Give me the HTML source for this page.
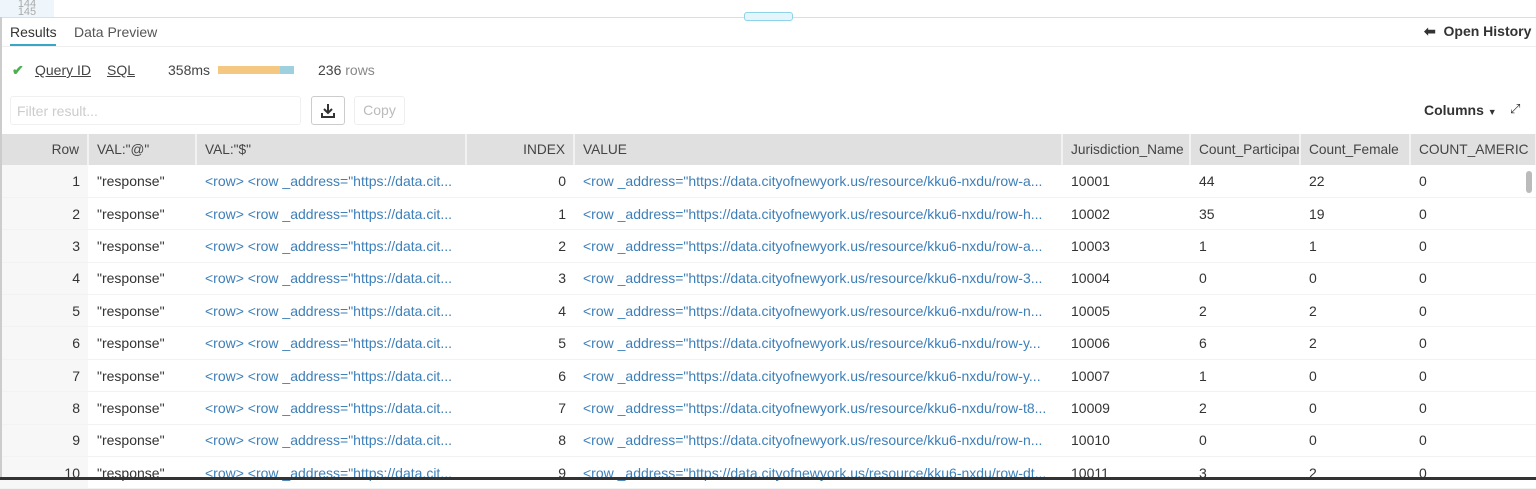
<!DOCTYPE html>
<html><head><style>
*{margin:0;padding:0;box-sizing:border-box}
body{width:1536px;height:480px;overflow:hidden;background:#fff;font-family:"Liberation Sans",sans-serif;font-size:14px;color:#333;position:relative}
.a{position:absolute;white-space:nowrap}
table{position:absolute;left:0;top:134px;border-collapse:collapse;table-layout:fixed;width:1536px}
th{background:#e0e0e0;height:31px;font-weight:normal;text-align:left;padding:0 8px;color:#444;border-right:2px solid #f2f2f2;overflow:hidden;white-space:nowrap;font-size:13.7px}
td{height:32.4px;padding:0 8px 0 9px;border-bottom:1px solid #f2f2f2;white-space:nowrap;overflow:hidden;color:#333;font-size:14px}
td.r,th.r{text-align:right}
td.n{background:#f7f7f7}
.l{color:#3d7fb8}
</style></head><body>
<div class="a" style="left:0;top:0;width:54px;height:17px;background:#eef6fb;color:#aaa;font-size:11px;text-align:center;line-height:8px;overflow:hidden">144<br>145</div>
<div class="a" style="left:0;top:17px;width:1536px;height:1px;background:#ddd"></div>
<div class="a" style="left:744px;top:12px;width:49px;height:9px;border:1px solid #8fd3e8;border-radius:3px;background:#e4f5fb"></div>
<div class="a" style="left:10px;top:24px;font-size:14px;color:#333">Results</div>
<div class="a" style="left:10px;top:44px;width:46px;height:2px;background:#3aa6c7"></div>
<div class="a" style="left:74px;top:24px;font-size:14px;color:#555">Data Preview</div>
<div class="a" style="left:0;top:46px;width:1536px;height:1px;background:#eee"></div>
<div class="a" style="left:1424px;top:23px;font-size:14px;color:#333;font-weight:bold">&#11013;&nbsp; Open History</div>
<div class="a" style="left:12px;top:62px;color:#4caf50;font-size:14px;font-weight:bold">&#10004;</div>
<div class="a" style="left:35px;top:62px;text-decoration:underline;color:#444">Query ID</div>
<div class="a" style="left:107px;top:62px;text-decoration:underline;color:#444">SQL</div>
<div class="a" style="left:168px;top:62px;color:#444">358ms</div>
<div class="a" style="left:218px;top:66px;width:62px;height:8px;background:#f5c882"></div>
<div class="a" style="left:280px;top:66px;width:14px;height:8px;background:#9fd0e0"></div>
<div class="a" style="left:318px;top:62px;color:#444">236 <span style="color:#888">rows</span></div>
<div class="a" style="left:10px;top:96px;width:291px;height:29px;border:1px solid #f0f0f0;border-radius:3px;color:#ccc;padding:6px 6px;font-size:14px">Filter result...</div>
<div class="a" style="left:311px;top:96px;width:34px;height:29px;border:1px solid #ccc;border-radius:3px;background:#fff">
<svg width="32" height="27" viewBox="0 0 32 27"><path d="M16 7v9M12 12l4 4 4-4" stroke="#333" stroke-width="2" fill="none"/><path d="M10 16v4h12v-4" stroke="#333" stroke-width="2" fill="none"/></svg></div>
<div class="a" style="left:354px;top:96px;width:51px;height:29px;border:1px solid #eee;border-radius:3px;color:#bbb;text-align:center;line-height:27px">Copy</div>
<div class="a" style="left:1424px;top:102px;font-weight:bold;color:#333">Columns <span style="font-size:9px">&#9660;</span></div>
<div class="a" style="left:1510px;top:101px;font-size:13px;color:#333">&#10530;</div>
<table>
<colgroup><col style="width:88px"><col style="width:108px"><col style="width:270px"><col style="width:108px"><col style="width:488px"><col style="width:128px"><col style="width:110px"><col style="width:110px"><col style="width:126px"></colgroup>
<tr><th class="r">Row</th><th>VAL:"@"</th><th>VAL:"$"</th><th class="r">INDEX</th><th>VALUE</th><th>Jurisdiction_Name</th><th>Count_Participant</th><th>Count_Female</th><th>COUNT_AMERIC</th></tr>
<tr><td class="r n">1</td><td>"response"</td><td class="l">&lt;row&gt; &lt;row _address="https://data.cit...</td><td class="r">0</td><td class="l">&lt;row _address="https://data.cityofnewyork.us/resource/kku6-nxdu/row-a...</td><td>10001</td><td>44</td><td>22</td><td>0</td></tr>
<tr><td class="r n">2</td><td>"response"</td><td class="l">&lt;row&gt; &lt;row _address="https://data.cit...</td><td class="r">1</td><td class="l">&lt;row _address="https://data.cityofnewyork.us/resource/kku6-nxdu/row-h...</td><td>10002</td><td>35</td><td>19</td><td>0</td></tr>
<tr><td class="r n">3</td><td>"response"</td><td class="l">&lt;row&gt; &lt;row _address="https://data.cit...</td><td class="r">2</td><td class="l">&lt;row _address="https://data.cityofnewyork.us/resource/kku6-nxdu/row-a...</td><td>10003</td><td>1</td><td>1</td><td>0</td></tr>
<tr><td class="r n">4</td><td>"response"</td><td class="l">&lt;row&gt; &lt;row _address="https://data.cit...</td><td class="r">3</td><td class="l">&lt;row _address="https://data.cityofnewyork.us/resource/kku6-nxdu/row-3...</td><td>10004</td><td>0</td><td>0</td><td>0</td></tr>
<tr><td class="r n">5</td><td>"response"</td><td class="l">&lt;row&gt; &lt;row _address="https://data.cit...</td><td class="r">4</td><td class="l">&lt;row _address="https://data.cityofnewyork.us/resource/kku6-nxdu/row-n...</td><td>10005</td><td>2</td><td>2</td><td>0</td></tr>
<tr><td class="r n">6</td><td>"response"</td><td class="l">&lt;row&gt; &lt;row _address="https://data.cit...</td><td class="r">5</td><td class="l">&lt;row _address="https://data.cityofnewyork.us/resource/kku6-nxdu/row-y...</td><td>10006</td><td>6</td><td>2</td><td>0</td></tr>
<tr><td class="r n">7</td><td>"response"</td><td class="l">&lt;row&gt; &lt;row _address="https://data.cit...</td><td class="r">6</td><td class="l">&lt;row _address="https://data.cityofnewyork.us/resource/kku6-nxdu/row-y...</td><td>10007</td><td>1</td><td>0</td><td>0</td></tr>
<tr><td class="r n">8</td><td>"response"</td><td class="l">&lt;row&gt; &lt;row _address="https://data.cit...</td><td class="r">7</td><td class="l">&lt;row _address="https://data.cityofnewyork.us/resource/kku6-nxdu/row-t8...</td><td>10009</td><td>2</td><td>0</td><td>0</td></tr>
<tr><td class="r n">9</td><td>"response"</td><td class="l">&lt;row&gt; &lt;row _address="https://data.cit...</td><td class="r">8</td><td class="l">&lt;row _address="https://data.cityofnewyork.us/resource/kku6-nxdu/row-n...</td><td>10010</td><td>0</td><td>0</td><td>0</td></tr>
<tr><td class="r n">10</td><td>"response"</td><td class="l">&lt;row&gt; &lt;row _address="https://data.cit...</td><td class="r">9</td><td class="l">&lt;row _address="https://data.cityofnewyork.us/resource/kku6-nxdu/row-dt...</td><td>10011</td><td>3</td><td>2</td><td>0</td></tr>
</table>
<div class="a" style="left:1526px;top:171px;width:6px;height:22px;background:#bbb;border-radius:3px"></div>
<div class="a" style="left:0;top:17px;width:2px;height:463px;background:#ccc"></div>
<div class="a" style="left:0;top:477px;width:1536px;height:3px;background:#333"></div>
</body></html>
